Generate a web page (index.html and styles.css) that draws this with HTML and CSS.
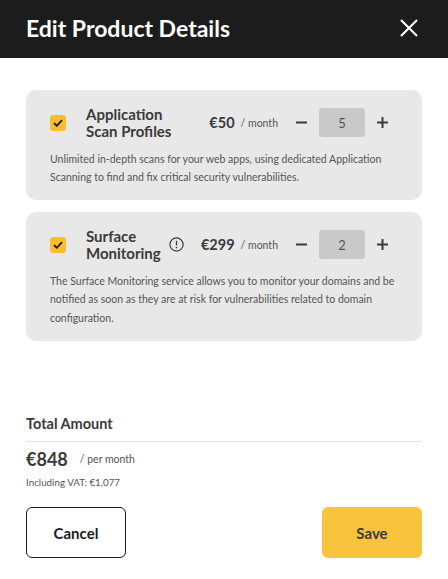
FILE: index.html
```html
<!DOCTYPE html>
<html lang="en">
<head>
    <meta charset="UTF-8">
    <meta name="viewport" content="width=device-width, initial-scale=1.0">
    <title>Edit Product Details</title>
    <link rel="stylesheet" href="styles.css">
</head>
<body>
    <header class="header">
        <h1>Edit Product Details</h1>
        <button class="close" aria-label="Close">
            <svg width="18" height="18" viewBox="0 0 18 18"><path d="M1 1l16 16M17 1L1 17" stroke="#fff" stroke-width="2" fill="none"/></svg>
        </button>
    </header>

    <main class="content">
        <section class="card">
            <div class="card-row">
                <span class="checkbox">
                    <svg width="10" height="8" viewBox="0 0 10 8"><path d="M1 4l2.8 2.8L9 1.2" stroke="#1c1c1c" stroke-width="1.8" fill="none"/></svg>
                </span>
                <h2 class="name">Application<br>Scan Profiles</h2>
                <div class="price"><strong>€50</strong><span>/ month</span></div>
                <div class="stepper">
                    <svg width="11" height="11" viewBox="0 0 11 11"><path d="M0 5.5h11" stroke="#3a3a3a" stroke-width="2"/></svg>
                    <span class="qty">5</span>
                    <svg width="11" height="11" viewBox="0 0 11 11"><path d="M0 5.5h11M5.5 0v11" stroke="#3a3a3a" stroke-width="2"/></svg>
                </div>
            </div>
            <p class="desc">Unlimited in-depth scans for your web apps, using dedicated Application Scanning to find and fix critical security vulnerabilities.</p>
        </section>

        <section class="card">
            <div class="card-row">
                <span class="checkbox">
                    <svg width="10" height="8" viewBox="0 0 10 8"><path d="M1 4l2.8 2.8L9 1.2" stroke="#1c1c1c" stroke-width="1.8" fill="none"/></svg>
                </span>
                <h2 class="name">Surface<br>Monitoring</h2>
                <svg class="info" width="15" height="15" viewBox="0 0 15 15"><circle cx="7.5" cy="7.5" r="6.6" stroke="#3a3a3a" stroke-width="1.2" fill="none"/><path d="M7.5 3.8v4.6" stroke="#3a3a3a" stroke-width="1.3"/><circle cx="7.5" cy="10.6" r=".8" fill="#3a3a3a"/></svg>
                <div class="price"><strong>€299</strong><span>/ month</span></div>
                <div class="stepper">
                    <svg width="11" height="11" viewBox="0 0 11 11"><path d="M0 5.5h11" stroke="#3a3a3a" stroke-width="2"/></svg>
                    <span class="qty">2</span>
                    <svg width="11" height="11" viewBox="0 0 11 11"><path d="M0 5.5h11M5.5 0v11" stroke="#3a3a3a" stroke-width="2"/></svg>
                </div>
            </div>
            <p class="desc">The Surface Monitoring service allows you to monitor your domains and be notified as soon as they are at risk for vulnerabilities related to domain configuration.</p>
        </section>
    </main>

    <footer class="footer">
        <h3 class="total-title">Total Amount</h3>
        <div class="total-row"><strong>€848</strong><span>/ per month</span></div>
        <p class="vat">Including VAT: €1,077</p>
        <div class="actions">
            <button class="button button-cancel">Cancel</button>
            <button class="button button-save">Save</button>
        </div>
    </footer>
</body>
</html>
```

FILE: styles.css
```css
body {
    margin: 0;
    height: 579px;
    overflow: hidden;
    display: flex;
    flex-direction: column;
    font-family: Lato, "Noto Sans", sans-serif;
    color: #3a3a3a;
    background-color: white;
}
h1, h2, h3, p {
    margin: 0;
}
.header {
    height: 55px;
    flex: none;
    display: flex;
    align-items: center;
    justify-content: space-between;
    padding: 0 30px 3px 26px;
    background-color: #1c1c1c;
}
.header h1 {
    color: white;
    font-size: 23px;
    font-weight: 700;
}
.close {
    display: flex;
    padding: 0;
    border: none;
    background: none;
}
.content {
    padding: 32px 26px 0;
    display: flex;
    flex-direction: column;
    gap: 12px;
}
.card {
    background-color: #e8e8e8;
    border-radius: 10px;
    padding: 16px 34px 13.5px 24px;
}
.card-row {
    display: flex;
    align-items: center;
}
.checkbox {
    width: 16px;
    height: 16px;
    flex: none;
    display: flex;
    align-items: center;
    justify-content: center;
    margin-right: 20px;
    border-radius: 3px;
    background-color: #fbbd2c;
}
.name {
    font-size: 15px;
    line-height: 16.5px;
    font-weight: 700;
}
.info {
    margin-left: 8px;
}
.price {
    margin-left: auto;
    display: flex;
    align-items: center;
    gap: 6px;
}
.price strong {
    font-size: 14.5px;
}
.price span {
    font-size: 10.5px;
    color: #555;
}
.stepper {
    margin-left: 18px;
    display: flex;
    align-items: center;
    gap: 12px;
}
.qty {
    width: 46px;
    height: 29px;
    display: flex;
    align-items: center;
    justify-content: center;
    border-radius: 3px;
    background-color: #c9c9c9;
    font-size: 13px;
    color: #555;
}
.desc {
    margin: 10.5px -10px 0 0;
    font-size: 10.5px;
    line-height: 18.5px;
    color: #555;
}
.footer {
    margin-top: auto;
    padding: 0 26px 21px;
}
.total-title {
    font-size: 14.5px;
    line-height: 16px;
    font-weight: 700;
    padding-bottom: 9px;
    border-bottom: 1px solid #e2e2e2;
}
.total-row {
    display: flex;
    align-items: center;
    gap: 12px;
    margin-top: 6px;
}
.total-row strong {
    font-size: 18px;
    line-height: 22px;
}
.total-row span {
    font-size: 10.5px;
    color: #555;
}
.vat {
    margin-top: 6px;
    font-size: 9.8px;
    line-height: 13px;
    color: #555;
}
.actions {
    margin-top: 18px;
    display: flex;
    justify-content: space-between;
}
.button {
    width: 100px;
    height: 51px;
    border-radius: 6px;
    font-family: inherit;
    font-size: 15px;
    font-weight: 700;
}
.button-cancel {
    background-color: white;
    border: 1px solid #1c1c1c;
    color: #1c1c1c;
}
.button-save {
    background-color: #f9c33d;
    border: none;
    color: #3a3a3a;
}
```
